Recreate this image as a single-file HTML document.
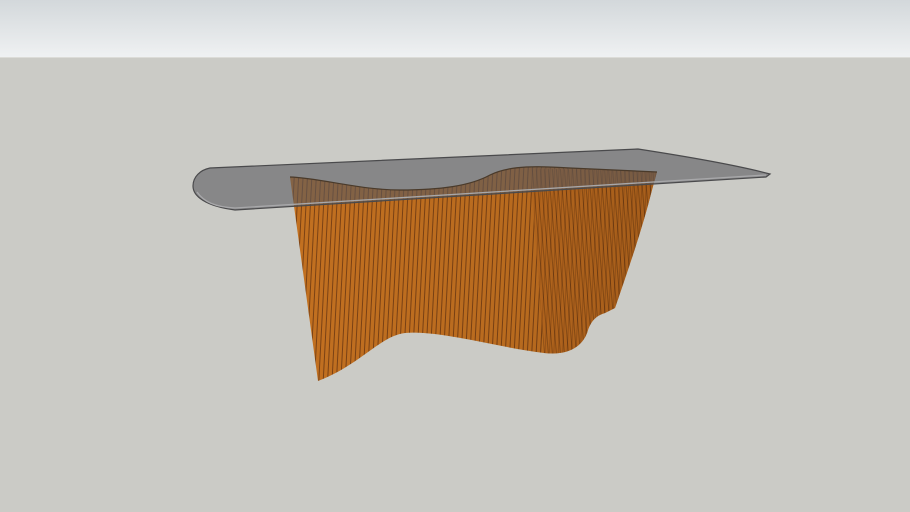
<!DOCTYPE html>
<html><head><meta charset="utf-8"><style>
html,body{margin:0;padding:0;width:910px;height:512px;overflow:hidden}
</style></head><body>
<svg width="910" height="512" viewBox="0 0 910 512" xmlns="http://www.w3.org/2000/svg">
<defs>
<linearGradient id="sky" x1="0" y1="0" x2="0" y2="1">
<stop offset="0" stop-color="#d3d8db"/><stop offset="1" stop-color="#eff1f2"/>
</linearGradient>
<pattern id="st" width="4.4" height="10" patternUnits="userSpaceOnUse" patternTransform="rotate(3)">
<rect width="4.4" height="10" fill="#c27020"/>
<rect x="3.4" width="1" height="10" fill="#7a4114"/>
</pattern>
<pattern id="st2" width="4" height="10" patternUnits="userSpaceOnUse" patternTransform="rotate(-5)">
<rect width="4" height="10" fill="#b8661c"/>
<rect x="3" width="1" height="10" fill="#6f3a10"/>
</pattern>
<linearGradient id="shade" x1="0" y1="0" x2="1" y2="0">
<stop offset="0" stop-color="#000" stop-opacity="0"/><stop offset="0.6" stop-color="#000" stop-opacity="0.05"/><stop offset="1" stop-color="#000" stop-opacity="0.12"/>
</linearGradient>
</defs>
<rect width="910" height="57" fill="url(#sky)"/>
<rect y="57" width="910" height="1" fill="#dcdcd8"/>
<rect y="58" width="910" height="454" fill="#cbcbc6"/>
<!-- wood base -->
<path id="base" d="M290,177 C320,178 360,190 400,190 C440,190 470,186 490,175 C510,165 540,166 570,168 L657,172 L652,190 C642,230 628,270 615,308 L605,313 C595,316 591,322 588,330 C584,345 570,356 544,353 C500,348 440,330 405,333 C380,336 360,365 318,381 Z" fill="url(#st)"/>
<path d="M530,168 L657,172 L652,190 C642,230 628,270 615,308 L605,313 C595,316 591,322 588,330 C584,345 570,356 544,353 Z" fill="url(#st2)" opacity="0.6"/>
<path d="M290,177 C320,178 360,190 400,190 C440,190 470,186 490,175 C510,165 540,166 570,168 L657,172 L652,190 C642,230 628,270 615,308 L605,313 C595,316 591,322 588,330 C584,345 570,356 544,353 C500,348 440,330 405,333 C380,336 360,365 318,381 Z" fill="url(#shade)"/>
<!-- glass top -->
<path d="M210,168 L638,149 C690,157 740,166 770,174 L766,177 L235,210 C205,206 193,196 193,186 C193,177 200,170 210,168 Z" fill="rgba(90,90,95,0.6)" stroke="#4a4a4c" stroke-width="1.2"/>
<path d="M197,192 C204,202 215,207 235,208 L766,175" fill="none" stroke="#a8a8aa" stroke-width="1.3"/>
<path d="M290,177 C320,178 360,190 400,190 C440,190 470,186 490,175 C510,165 540,166 570,168 L657,172" fill="none" stroke="#4a3a2a" stroke-width="1.2"/>
</svg>
</body></html>
